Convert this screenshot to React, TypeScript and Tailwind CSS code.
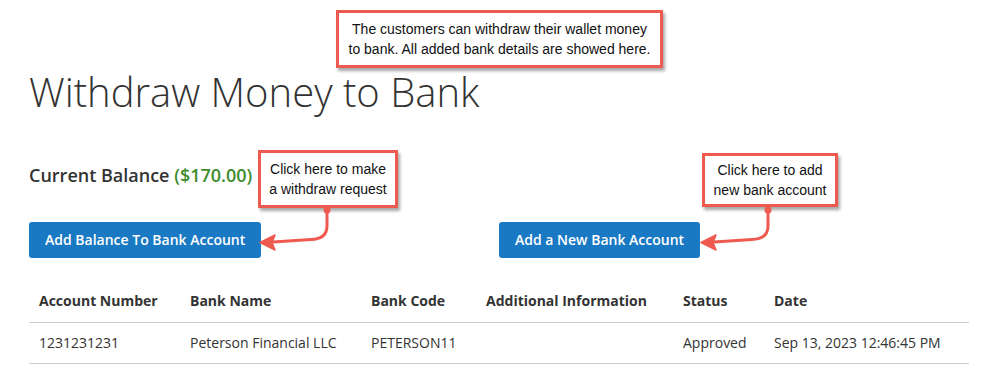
import React from 'react'

interface BankRow {
  accountNumber: string
  bankName: string
  bankCode: string
  additionalInfo: string
  status: string
  date: string
}

const rows: BankRow[] = [
  {
    accountNumber: '1231231231',
    bankName: 'Peterson Financial LLC',
    bankCode: 'PETERSON11',
    additionalInfo: '',
    status: 'Approved',
    date: 'Sep 13, 2023 12:46:45 PM'
  }
]

const Callout: React.FC<{ className: string; children: React.ReactNode }> = ({ className, children }) => (
  <div
    className={`absolute bg-white border-[3px] border-[#ef5a50] shadow-[2px_3px_3px_rgba(0,0,0,0.35)] text-center text-[14px] leading-5 text-[#111] font-['Liberation_Sans',Arial,sans-serif] ${className}`}
  >
    {children}
  </div>
)

// curved pointer from a callout down-left to a button
const Pointer: React.FC<{ left: number }> = ({ left }) => (
  <svg
    className="absolute top-[204px]"
    style={{ left }}
    width="74"
    height="50"
    viewBox="0 0 74 50"
  >
    <circle cx="68" cy="6" r="3.5" fill="#ef5a50" />
    <path d="M68 6 L68 22 Q68 35 52 35.5 L14 38" fill="none" stroke="#ef5a50" strokeWidth="3" strokeLinecap="round" />
    <path d="M1 38.5 L16 31 L13 38.5 L16 46 Z" fill="#ef5a50" stroke="#ef5a50" strokeWidth="1.5" strokeLinejoin="round" />
  </svg>
)

export default function App() {
  return (
    <div className="relative w-[997px] h-[382px] overflow-hidden bg-white font-['Open_Sans',sans-serif] text-[#333]">
      <div className="pl-[29px] pt-[70px] w-[969px]">
        <h1 className="text-[40px] leading-[44px] font-light text-[#333]">Withdraw Money to Bank</h1>

        <div className="mt-[49px] text-[18px] leading-6 font-semibold">
          Current Balance <span className="text-[#3d8c2e]">($170.00)</span>
        </div>

        <div className="mt-[35px] grid grid-cols-2 w-[940px]">
          <div>
            <button className="bg-[#1979c3] text-white text-[14px] leading-5 font-semibold px-4 py-2 rounded-[3px]">
              Add Balance To Bank Account
            </button>
          </div>
          <div>
            <button className="bg-[#1979c3] text-white text-[14px] leading-5 font-semibold px-4 py-2 rounded-[3px]">
              Add a New Bank Account
            </button>
          </div>
        </div>

        <table className="mt-[22px] w-[940px] table-fixed border-collapse text-[14px] leading-5 text-left">
          <thead>
            <tr className="border-b border-[#ccc]">
              <th className="w-[151px] px-[10px] py-[11px] font-bold">Account Number</th>
              <th className="w-[181px] px-[10px] py-[11px] font-bold">Bank Name</th>
              <th className="w-[115px] px-[10px] py-[11px] font-bold">Bank Code</th>
              <th className="w-[197px] px-[10px] py-[11px] font-bold">Additional Information</th>
              <th className="w-[91px] px-[10px] py-[11px] font-bold">Status</th>
              <th className="px-[10px] py-[11px] font-bold">Date</th>
            </tr>
          </thead>
          <tbody>
            {rows.map(row => (
              <tr key={row.accountNumber} className="border-b border-[#ccc]">
                <td className="px-[10px] py-[10px]">{row.accountNumber}</td>
                <td className="px-[10px] py-[10px]">{row.bankName}</td>
                <td className="px-[10px] py-[10px]">{row.bankCode}</td>
                <td className="px-[10px] py-[10px]">{row.additionalInfo}</td>
                <td className="px-[10px] py-[10px]">{row.status}</td>
                <td className="px-[10px] py-[10px] whitespace-nowrap">{row.date}</td>
              </tr>
            ))}
          </tbody>
        </table>
      </div>

      <Callout className="left-[336px] top-[10px] w-[327px] py-[6px]">
        The customers can withdraw their wallet money
        <br />
        to bank. All added bank details are showed here.
      </Callout>
      <Callout className="left-[258px] top-[150px] w-[140px] py-[6px]">
        Click here to make
        <br />
        a withdraw request
      </Callout>
      <Callout className="left-[702px] top-[153px] w-[136px] py-[4px]">
        Click here to add
        <br />
        new bank account
      </Callout>

      <Pointer left={259} />
      <Pointer left={700} />
    </div>
  )
}
